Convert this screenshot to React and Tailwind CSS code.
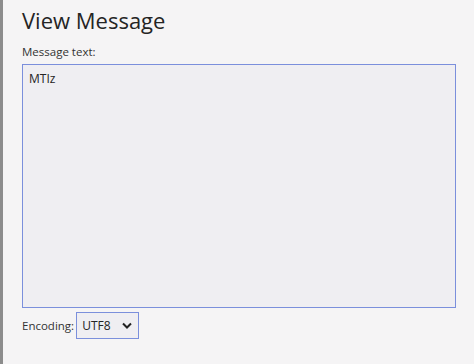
import React, { useState } from "react";

const App = () => {
  const [encoding, setEncoding] = useState("UTF8");

  return (
    <div
      className="w-[474px] h-[364px] bg-[#f5f4f5] border-l-[3px] border-[#8c8c8c] text-[#242424] overflow-hidden"
      style={{ fontFamily: '"Open Sans", "Noto Sans", sans-serif' }}
    >
      <div className="pl-[19px] pr-[18px] pt-[5px]">
        {/** title */}
        <h1 className="text-[22px] leading-[30px] font-normal">View Message</h1>
        {/** message */}
        <div className="mt-[9px] text-[11.5px] leading-[16px] text-[#333]">Message text:</div>
        <textarea
          readOnly
          value="MTIz"
          className="mt-[4px] block w-[434px] h-[244px] resize-none bg-[#efeef2] border border-[#7b8fdc] px-[6px] py-[5px] text-[12px] leading-[18px] text-[#242424] outline-none"
        />
        {/** encoding */}
        <div className="mt-[4px] flex items-center gap-[2px] text-[11.5px]">
          <label className="text-[#333]">Encoding:</label>
          <div className="relative">
            <select
              value={encoding}
              onChange={(e) => setEncoding(e.target.value)}
              className="appearance-none w-[63px] h-[27px] bg-[#efeef2] border border-[#7b8fdc] pl-[5px] text-[12px] text-[#242424] outline-none"
            >
              <option>UTF8</option>
              <option>ASCII</option>
              <option>Base64</option>
            </select>
            <svg
              className="absolute right-[7px] top-[10px] pointer-events-none"
              width="10"
              height="7"
              viewBox="0 0 10 7"
            >
              <path d="M1 1.5 L5 5.5 L9 1.5" fill="none" stroke="#222" strokeWidth="2" />
            </svg>
          </div>
        </div>
      </div>
    </div>
  );
};

export default App;
